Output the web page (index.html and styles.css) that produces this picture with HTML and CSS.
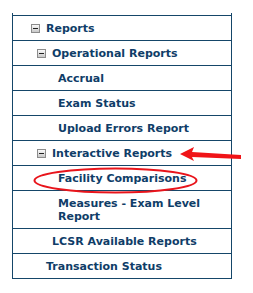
FILE: index.html
```html
<!DOCTYPE html>
<html lang="en">
<head>
    <meta charset="UTF-8">
    <title>Reports Menu</title>
    <link rel="stylesheet" href="styles.css">
</head>
<body>
    <div class="page">
        <div class="menu">
            <div class="row level1"><span class="toggle"></span>Reports</div>
            <div class="row level2"><span class="toggle"></span>Operational Reports</div>
            <div class="row level3">Accrual</div>
            <div class="row level3">Exam Status</div>
            <div class="row level3">Upload Errors Report</div>
            <div class="row level2"><span class="toggle"></span>Interactive Reports</div>
            <div class="row level3">Facility Comparisons</div>
            <div class="row level3">Measures - Exam Level<br>Report</div>
            <div class="row level2 leaf">LCSR Available Reports</div>
            <div class="row level1 leaf">Transaction Status</div>
        </div>
        <svg class="marks" width="253" height="293" viewBox="0 0 253 293">
            <ellipse cx="115.5" cy="180.5" rx="81" ry="12" fill="none" stroke="#e8141b" stroke-width="2"/>
            <polygon points="180,154 194,147 192,152 241,155 241,159 192,157 194,161" fill="#f01418"/>
        </svg>
    </div>
</body>
</html>
```

FILE: styles.css
```css
body {
    margin: 0;
    background-color: #fff;
    font-family: 'DejaVu Sans', Verdana, sans-serif;
}
.page {
    position: relative;
    width: 253px;
    height: 293px;
    padding-top: 13px;
    box-sizing: border-box;
}
.menu {
    margin-left: 12px;
    width: 218px;
    border-left: 1px solid #154669;
    border-right: 1px solid #154669;
    padding-top: 2px;
}
.row {
    border-top: 1px solid #154669;
    padding: 6px 0 5px;
    font-size: 11px;
    font-weight: bold;
    line-height: 13px;
    color: #0f3d68;
    white-space: nowrap;
}
.row:last-child {
    border-bottom: 1px solid #154669;
}
.level1 {
    padding-left: 18px;
}
.level2 {
    padding-left: 24px;
}
.level3 {
    padding-left: 45px;
}
.level1.leaf {
    padding-left: 33px;
}
.level2.leaf {
    padding-left: 39px;
}
.toggle {
    display: inline-block;
    position: relative;
    width: 7px;
    height: 7px;
    margin-right: 6px;
    vertical-align: -1px;
    border: 1px solid #8c8c8c;
    background: linear-gradient(#fafafa, #c8c8c8);
}
.toggle::after {
    content: "";
    position: absolute;
    left: 1px;
    top: 3px;
    width: 5px;
    height: 1px;
    background-color: #222;
}
.marks {
    position: absolute;
    left: 0;
    top: 0;
}
```
